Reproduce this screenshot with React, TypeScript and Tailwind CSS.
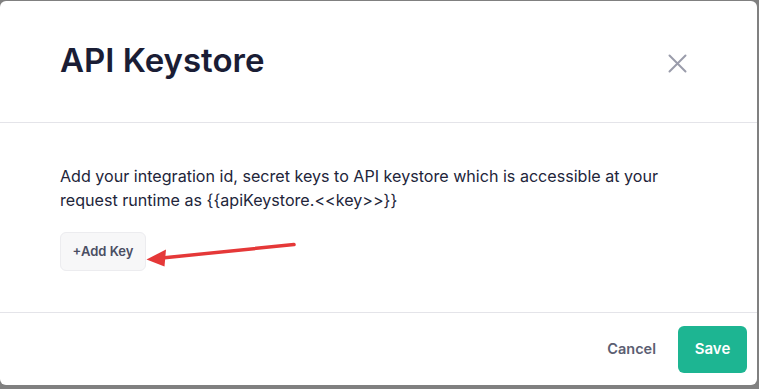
// API keystore modal, shown over a dimmed page.

const font = { fontFamily: "Inter, 'Noto Sans', sans-serif" };

// Red annotation arrow pointing at the Add Key button.
function PointerArrow() {
  return (
    <svg
      className="pointer-events-none absolute left-[140px] top-[236px]"
      width="160"
      height="34"
      viewBox="0 0 160 34"
      aria-hidden
    >
      <g transform="translate(-140 -236)">
        <path
          d="M294 243.5 L162 257"
          stroke="#e53838"
          strokeWidth="3.5"
          strokeLinecap="round"
        />
        <path d="M146.5 258.5 L166 248.5 L164.5 265.5 Z" fill="#e53838" />
      </g>
    </svg>
  );
}

function CloseIcon() {
  return (
    <svg width="19" height="19" viewBox="0 0 19 19" aria-hidden>
      <path
        d="M1.5 1.5 L17.5 17.5 M17.5 1.5 L1.5 17.5"
        stroke="#9a9cab"
        strokeWidth="2"
        strokeLinecap="round"
      />
    </svg>
  );
}

export default function App() {
  return (
    <div className="h-[389px] w-[759px] bg-[#808080] pt-px" style={font}>
      <div className="relative flex h-[384px] w-[757px] flex-col rounded-md bg-white">
        {/* Header */}
        <div className="flex h-[122px] items-start justify-between border-b border-[#e4e4e9] pl-[60px] pr-[70px] pt-[39px]">
          <h2 className="text-[33px] font-semibold leading-10 text-[#1a1d35]">
            API Keystore
          </h2>
          <button className="mt-[14px]">
            <CloseIcon />
          </button>
        </div>

        {/* Body */}
        <div className="flex-1 border-b border-[#e4e4e9] px-[60px] pt-[41px]">
          <p className="text-[16.1px] leading-6 text-[#22253a]">
            Add your integration id, secret keys to API keystore which is
            accessible at your request runtime as {"{{apiKeystore.<<key>>}}"}
          </p>
          <button className="mt-5 h-[39px] w-[86px] rounded-md border border-[#ececef] bg-[#f7f7f8] text-[13px] font-semibold text-[#4a4e63]">
            +Add Key
          </button>
        </div>

        {/* Footer */}
        <div className="flex h-[72px] items-center justify-end gap-[22px] pr-[10px]">
          <button className="text-[14.5px] font-semibold text-[#5b5e72]">
            Cancel
          </button>
          <button className="h-[47px] w-[69px] rounded-md bg-[#1db592] text-[15px] font-semibold text-white">
            Save
          </button>
        </div>

        <PointerArrow />
      </div>
    </div>
  );
}
